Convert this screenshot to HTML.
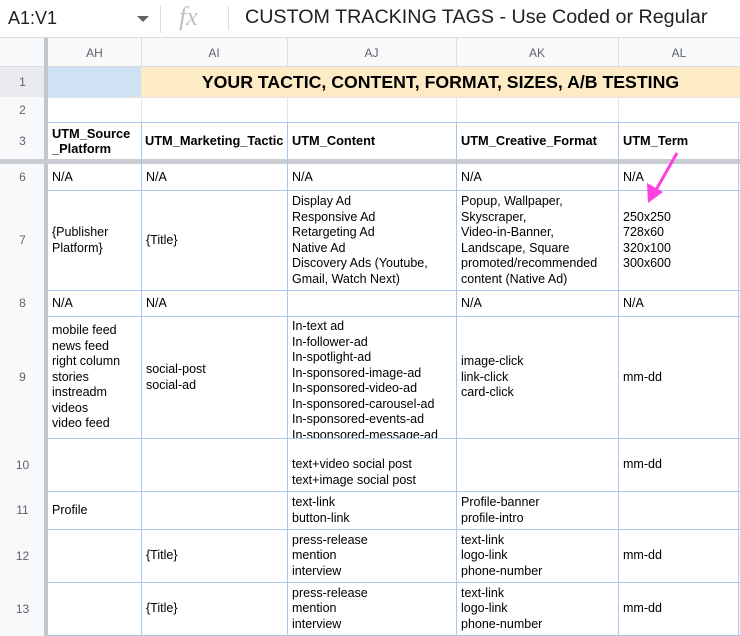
<!DOCTYPE html>
<html><head><meta charset="utf-8"><style>
*{margin:0;padding:0;box-sizing:border-box}
body{width:740px;height:636px;overflow:hidden;background:#fff;font-family:"Liberation Sans",Arial,sans-serif;position:relative;color:#000}
.a{position:absolute}
.c{position:absolute;display:flex;flex-direction:column;justify-content:center;padding:0 4px;font-size:12.5px;line-height:15.5px;overflow:hidden;white-space:nowrap}
.c.bd{font-size:12.8px;font-weight:bold}
.h{position:absolute;background:#f8f9fa;color:#5f6368;font-size:12px;display:flex;align-items:center;justify-content:center}
.vl{position:absolute;width:1px;background:#a9c9ec}
.hl{position:absolute;height:1px;background:#a9c9ec}
</style></head><body>
<div class="a" style="left:8px;top:6px;font-size:18px;line-height:24px;color:#202124">A1:V1</div>
<div class="a" style="left:137px;top:16px;width:0;height:0;border-left:6px solid transparent;border-right:6px solid transparent;border-top:6px solid #5f6368"></div>
<div class="a" style="left:160px;top:5px;width:1px;height:28px;background:#dadce0"></div>
<div class="a" style="left:179px;top:2px;font-family:'Liberation Serif',serif;font-style:italic;font-size:26px;color:#c0c0c0">fx</div>
<div class="a" style="left:228px;top:6px;width:1px;height:24px;background:#dadce0"></div>
<div class="a" style="left:245px;top:5px;font-size:19.7px;line-height:24px;color:#202124">CUSTOM TRACKING TAGS - Use Coded or Regular</div>
<div class="a" style="left:0;top:37px;width:740px;height:1px;background:#dadce0"></div>
<div class="h" style="left:0;top:38px;width:48px;height:29px"></div>
<div class="h" style="left:48px;top:38px;width:93px;height:29px">AH</div>
<div class="h" style="left:141px;top:38px;width:146px;height:29px">AI</div>
<div class="h" style="left:287px;top:38px;width:169px;height:29px">AJ</div>
<div class="h" style="left:456px;top:38px;width:162px;height:29px">AK</div>
<div class="h" style="left:618px;top:38px;width:122px;height:29px">AL</div>
<div class="a" style="left:141px;top:38px;width:1px;height:29px;background:#dadce0"></div>
<div class="a" style="left:287px;top:38px;width:1px;height:29px;background:#dadce0"></div>
<div class="a" style="left:456px;top:38px;width:1px;height:29px;background:#dadce0"></div>
<div class="a" style="left:618px;top:38px;width:1px;height:29px;background:#dadce0"></div>
<div class="a" style="left:0;top:66px;width:740px;height:1px;background:#dadce0"></div>
<div class="h" style="left:0;top:67px;width:45px;height:30px;background:#e8eaed">1</div>
<div class="h" style="left:0;top:97px;width:45px;height:25px">2</div>
<div class="h" style="left:0;top:122px;width:45px;height:37px">3</div>
<div class="h" style="left:0;top:164px;width:45px;height:26px">6</div>
<div class="h" style="left:0;top:190px;width:45px;height:100px">7</div>
<div class="h" style="left:0;top:290px;width:45px;height:26px">8</div>
<div class="h" style="left:0;top:316px;width:45px;height:122px">9</div>
<div class="h" style="left:0;top:438px;width:45px;height:53px">10</div>
<div class="h" style="left:0;top:491px;width:45px;height:38px">11</div>
<div class="h" style="left:0;top:529px;width:45px;height:53px">12</div>
<div class="h" style="left:0;top:582px;width:45px;height:54px">13</div>
<div class="a" style="left:44px;top:38px;width:4px;height:598px;background:#c4c7c9"></div>
<div class="a" style="left:48px;top:67px;width:93px;height:30px;background:#cfe2f3"></div>
<div class="a" style="left:141px;top:67px;width:599px;height:30px;background:#fdebc6"></div>
<div class="a" style="left:141px;top:67px;width:599px;height:30px;display:flex;align-items:center;justify-content:center;font-size:17.7px;font-weight:bold">YOUR TACTIC, CONTENT, FORMAT, SIZES, A/B TESTING</div>
<div class="a" style="left:0;top:159px;width:740px;height:5px;background:#c9ccd0"></div>
<div class="a" style="left:48px;top:97px;width:692px;height:1px;background:#e2e3e3"></div>
<div class="vl" style="left:141px;top:97px;height:25px;background:#e2e3e3"></div>
<div class="vl" style="left:287px;top:97px;height:25px;background:#e2e3e3"></div>
<div class="vl" style="left:456px;top:97px;height:25px;background:#e2e3e3"></div>
<div class="vl" style="left:618px;top:97px;height:25px;background:#e2e3e3"></div>
<div class="hl" style="left:48px;top:122px;width:692px"></div>
<div class="hl" style="left:48px;top:190px;width:692px"></div>
<div class="hl" style="left:48px;top:290px;width:692px"></div>
<div class="hl" style="left:48px;top:316px;width:692px"></div>
<div class="hl" style="left:48px;top:438px;width:692px"></div>
<div class="hl" style="left:48px;top:491px;width:692px"></div>
<div class="hl" style="left:48px;top:529px;width:692px"></div>
<div class="hl" style="left:48px;top:582px;width:692px"></div>
<div class="hl" style="left:48px;top:635px;width:692px"></div>
<div class="vl" style="left:141px;top:122px;height:514px"></div>
<div class="vl" style="left:287px;top:122px;height:514px"></div>
<div class="vl" style="left:456px;top:122px;height:514px"></div>
<div class="vl" style="left:618px;top:122px;height:514px"></div>
<div class="vl" style="left:738px;top:122px;height:514px"></div>
<div class="c bd" style="left:48px;top:123px;width:93px;height:36px">UTM_Source<br>_Platform</div>
<div class="c bd" style="left:142px;top:123px;width:145px;height:36px;padding:0 3px">UTM_Marketing_Tactic</div>
<div class="c bd" style="left:288px;top:123px;width:168px;height:36px">UTM_Content</div>
<div class="c bd" style="left:457px;top:123px;width:161px;height:36px">UTM_Creative_Format</div>
<div class="c bd" style="left:619px;top:123px;width:119px;height:36px">UTM_Term</div>
<div class="c" style="left:48px;top:165px;width:93px;height:25px">N/A</div>
<div class="c" style="left:142px;top:165px;width:145px;height:25px">N/A</div>
<div class="c" style="left:288px;top:165px;width:168px;height:25px">N/A</div>
<div class="c" style="left:457px;top:165px;width:161px;height:25px">N/A</div>
<div class="c" style="left:619px;top:165px;width:119px;height:25px">N/A</div>
<div class="c" style="left:48px;top:191px;width:93px;height:99px">{Publisher<br>Platform}</div>
<div class="c" style="left:142px;top:191px;width:145px;height:99px">{Title}</div>
<div class="c" style="left:288px;top:191px;width:168px;height:99px">Display Ad<br>Responsive Ad<br>Retargeting Ad<br>Native Ad<br>Discovery Ads (Youtube,<br>Gmail, Watch Next)</div>
<div class="c" style="left:457px;top:191px;width:161px;height:99px">Popup, Wallpaper,<br>Skyscraper,<br>Video-in-Banner,<br>Landscape, Square<br>promoted/recommended<br>content (Native Ad)</div>
<div class="c" style="left:619px;top:191px;width:119px;height:99px">250x250<br>728x60<br>320x100<br>300x600</div>
<div class="c" style="left:48px;top:291px;width:93px;height:25px">N/A</div>
<div class="c" style="left:142px;top:291px;width:145px;height:25px">N/A</div>
<div class="c" style="left:619px;top:291px;width:119px;height:25px">N/A</div>
<div class="c" style="left:457px;top:291px;width:161px;height:25px">N/A</div>
<div class="c" style="left:48px;top:317px;width:93px;height:121px">mobile feed<br>news feed<br>right column<br>stories<br>instreadm<br>videos<br>video feed</div>
<div class="c" style="left:142px;top:317px;width:145px;height:121px">social-post<br>social-ad</div>
<div class="c" style="left:288px;top:317px;width:168px;height:121px;justify-content:flex-start;padding-top:2px">In-text ad<br>In-follower-ad<br>In-spotlight-ad<br>In-sponsored-image-ad<br>In-sponsored-video-ad<br>In-sponsored-carousel-ad<br>In-sponsored-events-ad<br>In-sponsored-message-ad</div>
<div class="c" style="left:457px;top:317px;width:161px;height:121px">image-click<br>link-click<br>card-click</div>
<div class="c" style="left:619px;top:317px;width:119px;height:121px">mm-dd</div>
<div class="c" style="left:288px;top:439px;width:168px;height:52px">&nbsp;<br>text+video social post<br>text+image social post</div>
<div class="c" style="left:619px;top:439px;width:119px;height:52px">mm-dd</div>
<div class="c" style="left:48px;top:492px;width:93px;height:37px">Profile</div>
<div class="c" style="left:288px;top:492px;width:168px;height:37px">text-link<br>button-link</div>
<div class="c" style="left:457px;top:492px;width:161px;height:37px">Profile-banner<br>profile-intro</div>
<div class="c" style="left:142px;top:530px;width:145px;height:52px">{Title}</div>
<div class="c" style="left:288px;top:530px;width:168px;height:52px">press-release<br>mention<br>interview</div>
<div class="c" style="left:457px;top:530px;width:161px;height:52px">text-link<br>logo-link<br>phone-number</div>
<div class="c" style="left:619px;top:530px;width:119px;height:52px">mm-dd</div>
<div class="c" style="left:142px;top:583px;width:145px;height:52px">{Title}</div>
<div class="c" style="left:288px;top:583px;width:168px;height:52px">press-release<br>mention<br>interview</div>
<div class="c" style="left:457px;top:583px;width:161px;height:52px">text-link<br>logo-link<br>phone-number</div>
<div class="c" style="left:619px;top:583px;width:119px;height:52px">mm-dd</div>
<svg class="a" style="left:0;top:0" width="740" height="636">
<line x1="677" y1="153" x2="656" y2="190" stroke="#ff3fe0" stroke-width="3"/>
<polygon points="648,203 647,183 663,192" fill="#ff3fe0"/>
</svg>
</body></html>
